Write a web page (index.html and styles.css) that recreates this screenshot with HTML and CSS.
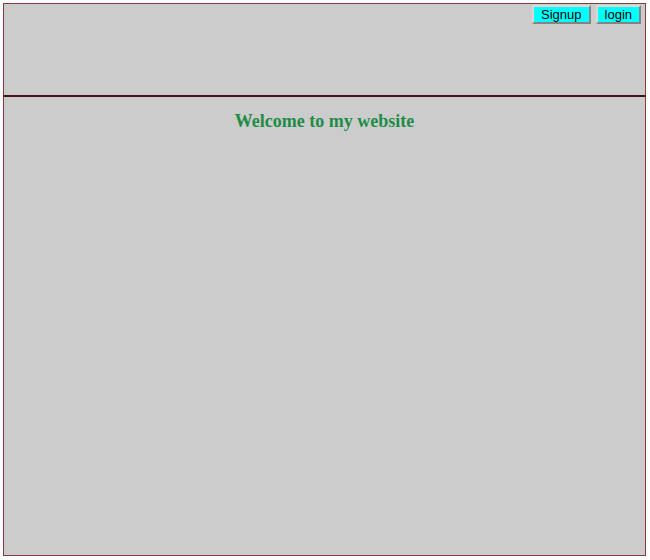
FILE: index.html
```html
<!DOCTYPE html>
<html>
<head>
<meta charset="utf-8">
<title>Welcome</title>
<link rel="stylesheet" href="styles.css">
</head>
<body>
<div class="page">
  <div class="header">
    <button class="btn">Signup</button>
    <button class="btn">login</button>
  </div>
  <div class="content">
    <h3 class="title">Welcome to my website</h3>
  </div>
</div>
</body>
</html>
```

FILE: styles.css
```css
html, body {
  margin: 0;
  padding: 0;
  background: #ffffff;
}
.page {
  margin: 3px 0 0 3px;
  width: 643px;
}
.header {
  box-sizing: border-box;
  height: 93px;
  border: 1px solid #843c3c;
  border-bottom-color: #4a1010;
  background: #cccccc;
  display: flex;
  justify-content: flex-end;
  align-items: flex-start;
  gap: 5px;
  padding: 1px 4px 0 0;
}
.btn {
  box-sizing: border-box;
  height: 19px;
  margin: 0;
  padding: 0 7px;
  font-family: "Liberation Sans", Arial, sans-serif;
  font-size: 13px;
  line-height: 14px;
  color: #000;
  background: #00ffff;
  border: 2px outset #d8d8d8;
}
.content {
  box-sizing: border-box;
  height: 460px;
  border: 1px solid #843c3c;
  border-top-color: #4a1010;
  background: #cccccc;
  padding-top: 1px;
}
.title {
  margin: 13px 0 0 0;
  text-align: center;
  font-family: "Liberation Serif", "Times New Roman", serif;
  font-weight: bold;
  font-size: 18px;
  color: #1e8c46;
}
```
